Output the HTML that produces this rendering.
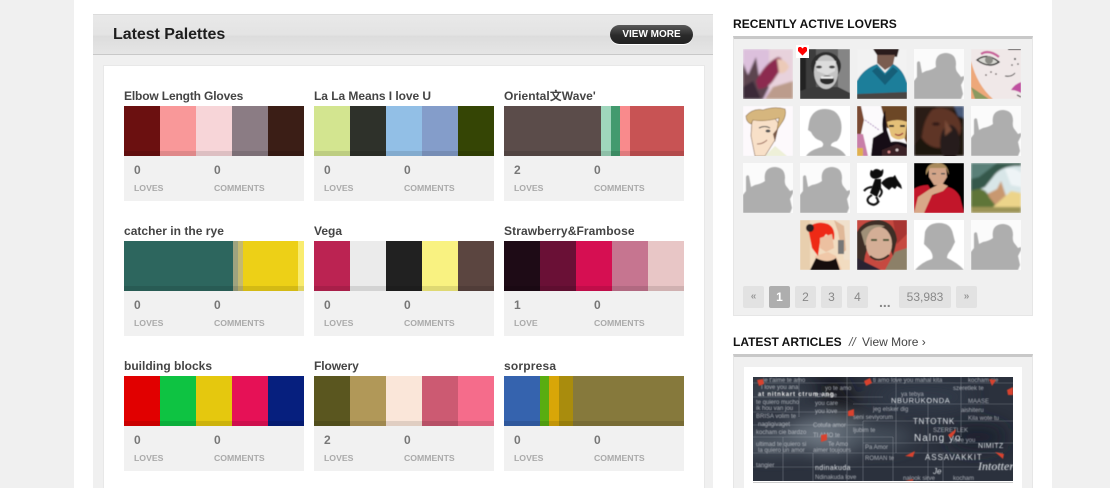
<!DOCTYPE html>
<html><head><meta charset="utf-8">
<style>
html,body{margin:0;padding:0;width:1110px;height:488px;overflow:hidden;background:#f0f0f0}
#r{position:absolute;left:0;top:0;width:1110px;height:488px;overflow:hidden;font-family:"Liberation Sans","Noto Sans CJK SC",sans-serif}
#r div{position:absolute;display:block}
.w{left:74px;top:0;width:978px;height:488px;background:#fff}
.hd{left:93px;top:14px;width:620px;height:41px;box-sizing:border-box;border-top:1px solid #dcdcdc;border-bottom:1px solid #c8c8c8;background:linear-gradient(#e9e9e9 0,#e3e3e3 52%,#dcdcdc 53%,#e5e5e5 100%)}
.pn{left:93px;top:55px;width:620px;height:433px;background:#f0f0f0}
.wb{left:103px;top:65px;width:600px;height:423px;background:#fff;border:1px solid #e8e8e8;border-bottom:0}
.ttl{left:113px;top:25px;font-size:16px;line-height:20px;font-weight:bold;color:#1e1e1e;white-space:nowrap;letter-spacing:-.05px}
.btn{left:610px;top:25px;width:83px;height:19px;border-radius:10px;background:linear-gradient(#5a5a5a,#2a2a2a 55%,#222);color:#fff;font-size:10px;font-weight:bold;line-height:19px;text-align:center;box-shadow:0 1px 0 #fff}
.p{width:180px;height:95px}
.n{left:0;top:-18px;font-size:12px;line-height:16px;font-weight:bold;color:#444;white-space:nowrap}
.s{left:0;top:0;width:180px;height:50px;overflow:hidden}
.s i{position:absolute;top:0;height:50px;display:block}
.st{left:0;top:45px;width:180px;height:5px;background:rgba(0,0,0,.1)}
.b{left:0;top:50px;width:180px;height:45px;background:#f1f1f1}
.v{top:6px;font-size:12px;line-height:16px;font-weight:bold;color:#777}
.l{top:27px;font-size:8.7px;line-height:11px;font-weight:bold;color:#aaa;white-space:nowrap}
.h{left:733px;font-size:12px;line-height:16px;font-weight:bold;color:#111;white-space:nowrap}
.sb{left:733px;top:36px;width:298px;height:276px;background:#f0f0f0;border:1px solid #e6e6e6;border-top:3px solid #c8c8c8}
.pg{top:286px;height:22px;background:#e2e2e2;border-radius:2px;color:#888;font-size:12px;line-height:22px;text-align:center}
</style></head><body><div id="r">
<div class="w"></div>
<div class="hd"></div><div class="pn"></div><div class="wb"></div>
<div class="ttl">Latest Palettes</div><div class="btn">VIEW MORE</div>

<div class="p" style="left:124px;top:106px"><div class="n" style="letter-spacing:-.15px">Elbow Length Gloves</div><div class="s"><i style="left:0;width:36px;background:#6b1010"></i><i style="left:36px;width:36px;background:#f99899"></i><i style="left:72px;width:36px;background:#f7d5d8"></i><i style="left:108px;width:36px;background:#8b7c84"></i><i style="left:144px;width:36px;background:#3b1e16"></i><div class="st"></div></div><div class="b"><div class="v" style="left:10px">0</div><div class="l" style="left:10px">LOVES</div><div class="v" style="left:90px">0</div><div class="l" style="left:90px">COMMENTS</div></div></div>

<div class="p" style="left:314px;top:106px"><div class="n" style="letter-spacing:-.05px">La La Means I love U</div><div class="s"><i style="left:0;width:36px;background:#d3e590"></i><i style="left:36px;width:36px;background:#2e312a"></i><i style="left:72px;width:36px;background:#92bfe6"></i><i style="left:108px;width:36px;background:#849dca"></i><i style="left:144px;width:36px;background:#354505"></i><div class="st"></div></div><div class="b"><div class="v" style="left:10px">0</div><div class="l" style="left:10px">LOVES</div><div class="v" style="left:90px">0</div><div class="l" style="left:90px">COMMENTS</div></div></div>

<div class="p" style="left:504px;top:106px"><div class="n" style="letter-spacing:.05px">Oriental文Wave'</div><div class="s"><i style="left:0;width:97px;background:#5b4c4a"></i><i style="left:97px;width:10px;background:#9fd6bc"></i><i style="left:107px;width:9px;background:#429a6e"></i><i style="left:116px;width:10px;background:#f98a8c"></i><i style="left:126px;width:54px;background:#c85354"></i><div class="st"></div></div><div class="b"><div class="v" style="left:10px">2</div><div class="l" style="left:10px">LOVES</div><div class="v" style="left:90px">0</div><div class="l" style="left:90px">COMMENTS</div></div></div>

<div class="p" style="left:124px;top:241px"><div class="n" style="letter-spacing:.03px">catcher in the rye</div><div class="s"><i style="left:0;width:109px;background:#2d665e"></i><i style="left:109px;width:5px;background:#9fa37f"></i><i style="left:114px;width:5px;background:#c5b970"></i><i style="left:119px;width:55px;background:#edd017"></i><i style="left:174px;width:6px;background:#f9ec6f"></i><div class="st"></div></div><div class="b"><div class="v" style="left:10px">0</div><div class="l" style="left:10px">LOVES</div><div class="v" style="left:90px">0</div><div class="l" style="left:90px">COMMENTS</div></div></div>

<div class="p" style="left:314px;top:241px"><div class="n">Vega</div><div class="s"><i style="left:0;width:36px;background:#bb2352"></i><i style="left:36px;width:36px;background:#ebebeb"></i><i style="left:72px;width:36px;background:#212121"></i><i style="left:108px;width:36px;background:#f9f281"></i><i style="left:144px;width:36px;background:#5b4540"></i><div class="st"></div></div><div class="b"><div class="v" style="left:10px">0</div><div class="l" style="left:10px">LOVES</div><div class="v" style="left:90px">0</div><div class="l" style="left:90px">COMMENTS</div></div></div>

<div class="p" style="left:504px;top:241px"><div class="n" style="letter-spacing:.1px">Strawberry&amp;Frambose</div><div class="s"><i style="left:0;width:36px;background:#1e0b16"></i><i style="left:36px;width:36px;background:#6a1036"></i><i style="left:72px;width:36px;background:#d60f52"></i><i style="left:108px;width:36px;background:#c67590"></i><i style="left:144px;width:36px;background:#e8c6c6"></i><div class="st"></div></div><div class="b"><div class="v" style="left:10px">1</div><div class="l" style="left:10px">LOVE</div><div class="v" style="left:90px">0</div><div class="l" style="left:90px">COMMENTS</div></div></div>

<div class="p" style="left:124px;top:376px"><div class="n">building blocks</div><div class="s"><i style="left:0;width:36px;background:#e10000"></i><i style="left:36px;width:36px;background:#0ec342"></i><i style="left:72px;width:36px;background:#e5c80e"></i><i style="left:108px;width:36px;background:#e61156"></i><i style="left:144px;width:36px;background:#061f7e"></i><div class="st"></div></div><div class="b"><div class="v" style="left:10px">0</div><div class="l" style="left:10px">LOVES</div><div class="v" style="left:90px">0</div><div class="l" style="left:90px">COMMENTS</div></div></div>

<div class="p" style="left:314px;top:376px"><div class="n" style="letter-spacing:-.1px">Flowery</div><div class="s"><i style="left:0;width:36px;background:#5a561f"></i><i style="left:36px;width:36px;background:#b19858"></i><i style="left:72px;width:36px;background:#fae6d9"></i><i style="left:108px;width:36px;background:#cc5a72"></i><i style="left:144px;width:36px;background:#f56c8b"></i><div class="st"></div></div><div class="b"><div class="v" style="left:10px">2</div><div class="l" style="left:10px">LOVES</div><div class="v" style="left:90px">0</div><div class="l" style="left:90px">COMMENTS</div></div></div>

<div class="p" style="left:504px;top:376px"><div class="n" style="letter-spacing:.2px">sorpresa</div><div class="s"><i style="left:0;width:36px;background:#3563ae"></i><i style="left:36px;width:9px;background:#59ad11"></i><i style="left:45px;width:10px;background:#d8a608"></i><i style="left:55px;width:14px;background:#a98c0d"></i><i style="left:69px;width:111px;background:#86793c"></i><div class="st"></div></div><div class="b"><div class="v" style="left:10px">0</div><div class="l" style="left:10px">LOVES</div><div class="v" style="left:90px">0</div><div class="l" style="left:90px">COMMENTS</div></div></div>

<div class="h" style="top:16px;letter-spacing:.04px">RECENTLY ACTIVE LOVERS</div>
<div class="sb"></div>

<svg style="position:absolute;left:0;top:0" width="1110" height="488" viewBox="0 0 1110 488">
<defs>
<filter id="bl" x="-10%" y="-10%" width="120%" height="120%"><feGaussianBlur stdDeviation="1"/></filter>
<filter id="bm" x="-10%" y="-10%" width="120%" height="120%"><feGaussianBlur stdDeviation=".6"/></filter>
<filter id="bs" x="-10%" y="-10%" width="120%" height="120%"><feGaussianBlur stdDeviation=".4"/></filter>
<filter id="bc" x="-30%" y="-30%" width="160%" height="160%"><feGaussianBlur stdDeviation="9"/></filter>
<g id="sa"><rect width="50" height="50" fill="#fbfbfb"/><path filter="url(#bs)" fill="#aeaeae" d="M0 50V32L3 28L3 14Q4 11 6 13L8 24L12 22Q18 21 22 18Q20 5 31 4Q42 4 42 15Q41 21 44 24L47 28L50 27V30L47 36L49 45L47 50Z"/></g>
<g id="sb"><rect width="50" height="50" fill="#fff"/><path filter="url(#bs)" fill="#aeaeae" d="M6 50Q10 44 22 41Q25 38 21 35Q14 33 11 26L8 24Q9 16 10 13Q14 3 25 3Q38 3 41 16Q43 28 37 35Q30 37 31 40Q42 43 46 50Z"/></g>
<g id="sc"><rect width="50" height="50" fill="#fff"/><path filter="url(#bs)" fill="#aeaeae" d="M1 50Q8 42 18 39Q20 36 16 30L10 24L11 12Q14 3 25 3Q37 3 39 14L41 22L37 30Q33 34 33 38Q44 43 50 50Z"/></g>
</defs>

<!-- row 1 -->
<svg x="743" y="49" width="50" height="50"><g filter="url(#bl)"><rect width="50" height="50" fill="#dcc0dc"/><rect x="26" width="24" height="50" fill="#e8d2dc"/><path d="M0 50V14L5 26L13 8L16 28L26 38L20 50Z" fill="#5c4450"/><path d="M0 50V38L10 32L18 50Z" fill="#3a2c38"/><path d="M13 32Q22 14 35 8Q42 9 38 20L30 32Q24 40 15 40Z" fill="#8c2c50"/><path d="M34 10Q43 10 46 18Q42 26 36 24Z" fill="#eccab8"/><path d="M22 50L30 38L50 32V50Z" fill="#bc9c8c"/></g></svg>
<svg x="800" y="49" width="50" height="50"><g filter="url(#bm)"><rect width="50" height="50" fill="#5e5e5e"/><rect width="6" height="50" fill="#242424"/><rect x="6" width="10" height="50" fill="#3e3e3e"/><rect x="38" width="12" height="50" fill="#858585"/><path d="M0 50V42L12 38H38L50 44V50Z" fill="#3a3a3a"/><ellipse cx="26" cy="17" rx="15" ry="14" fill="#2e2e2e"/><ellipse cx="26" cy="23" rx="12" ry="17" fill="#c4c4c4"/><path d="M16 12H36L35 22L27 26L17 22Z" fill="#dcdcdc"/><ellipse cx="19" cy="18" rx="3" ry="1.5" fill="#444"/><ellipse cx="32" cy="18" rx="3" ry="1.5" fill="#444"/><ellipse cx="27" cy="31" rx="7" ry="4.5" fill="#2a2a2a"/><rect x="21" y="27.5" width="12" height="2" fill="#eee"/></g></svg>
<svg x="857" y="49" width="50" height="50"><g filter="url(#bm)"><rect width="50" height="50" fill="#f2f2f2"/><path d="M16 0H42L40 8L32 7L22 9Z" fill="#2b1f1c"/><path d="M20 6H38L36 16L28 21L20 14Z" fill="#7a5c50"/><path d="M0 50V32Q6 20 20 15L28 24L36 15Q46 20 50 34V50Z" fill="#1f7e9a"/><path d="M15 22L28 36L41 22L36 18L28 26L20 18Z" fill="#125f78"/><path d="M0 45L50 43V50H0Z" fill="#4a4442"/></g></svg>
<svg x="914" y="49" width="50" height="50"><use href="#sa"/></svg>
<svg x="971" y="49" width="50" height="50"><g filter="url(#bs)"><rect width="50" height="50" fill="#f0e8e8"/><path d="M0 12Q6 36 22 50H0Z" fill="#eda87a"/><path d="M0 38L18 50H4Z" fill="#8a9a60"/><path d="M6 11Q16 3 28 13Q18 20 6 11Z" fill="#d8d8d2" stroke="#222" stroke-width="1.4"/><circle cx="18" cy="11" r="4" fill="#8a8a84"/><path d="M10 5Q18 0 28 8" stroke="#c8609a" stroke-width="2.4" fill="none"/><path d="M37 0H50" stroke="#222" stroke-width="1.6"/><path d="M34 27Q41 28 44 24" stroke="#333" fill="none"/><path d="M40 41Q44 35 50 33V44Q45 41 40 41Z" fill="#c050a0"/><path d="M46 46L50 48" stroke="#222"/><circle cx="44" cy="10" r="1" fill="#222"/><circle cx="41" cy="16" r=".8" fill="#222"/><circle cx="47" cy="15" r=".8" fill="#222"/><circle cx="20" cy="23" r=".8" fill="#322"/><circle cx="15" cy="26" r=".8" fill="#322"/><circle cx="25" cy="25" r=".8" fill="#322"/></g></svg>
<!-- row 2 -->
<svg x="743" y="106" width="50" height="50"><g filter="url(#bs)"><rect width="50" height="50" fill="#fdf9fc"/><path d="M12 50L8 30L9 14L30 10L36 18L32 34L22 50Z" fill="#f8e0c8" stroke="#7a5a40" stroke-width=".6"/><path d="M3 10Q10 2 20 4Q32 0 42 3Q44 10 38 18L34 24L36 12Q22 16 10 14L8 18Q3 16 3 10Z" fill="#d6b67e" stroke="#8a6a3a" stroke-width=".6"/><path d="M16 22Q22 19 27 22" stroke="#444" fill="none"/><ellipse cx="25" cy="25" rx="2.5" ry="1.5" fill="#555"/><path d="M30 28L35 22L32 36Z" fill="#7a5a48"/><path d="M14 38Q20 38 24 34" stroke="#a07060" fill="none"/><path d="M22 50L32 40L44 50Z" fill="#eef0d8"/></g></svg>
<svg x="800" y="106" width="50" height="50"><use href="#sb"/></svg>
<svg x="857" y="106" width="50" height="50"><g filter="url(#bs)"><rect width="50" height="50" fill="#fcfafc"/><path d="M0 28H6L11 50H0Z" fill="#c87ea8"/><path d="M0 0H4L7 14L4 28H0Z" fill="#7a4830"/><path d="M0 42H6V50H0Z" fill="#e0b050"/><path d="M24 0H50V38L44 24L30 22Z" fill="#6c4628"/><path d="M28 4Q24 14 26 26L16 32L14 50H50V38Q40 34 34 36L30 24Z" fill="#151012"/><path d="M30 16Q40 12 50 16L48 32Q40 36 34 30Z" fill="#e4c078"/><rect x="32" y="19" width="5" height="2" fill="#222"/><rect x="43" y="19" width="5" height="2" fill="#222"/><path d="M38 28Q42 31 46 27" stroke="#a04040" stroke-width="1.4" fill="none"/><path d="M25 44L40 38L50 42V50H25Z" fill="#3a2228"/><circle cx="32" cy="46" r="1.4" fill="#d88"/><circle cx="40" cy="44" r="1.4" fill="#dcc"/><path d="M8 14L22 24" stroke="#b090c0" stroke-dasharray="2 1" fill="none"/></g></svg>
<svg x="914" y="106" width="50" height="50"><g filter="url(#bl)"><rect width="50" height="50" fill="#1e1410"/><path d="M0 0H50V6L30 2Z" fill="#3a2a24"/><path d="M40 0H50V12L44 10Z" fill="#4a5a7a"/><ellipse cx="26" cy="22" rx="21" ry="20" fill="#5e3626"/><path d="M0 0H22Q10 10 8 30L0 40Z" fill="#2a1a14"/><ellipse cx="22" cy="18" rx="4" ry="1.6" fill="#2a1812"/><ellipse cx="36" cy="37" rx="10" ry="18" fill="#261c1a"/><path d="M31 14L38 24L31 30Z" fill="#7a4c38"/></g></svg>
<svg x="971" y="106" width="50" height="50"><use href="#sa"/></svg>
<!-- row 3 -->
<svg x="743" y="163" width="50" height="50"><use href="#sa"/></svg>
<svg x="800" y="163" width="50" height="50"><use href="#sa"/></svg>
<svg x="857" y="163" width="50" height="50"><rect width="50" height="50" fill="#fff"/><g filter="url(#bs)" fill="#0c0c0c"><path d="M14 7Q12 11 14 14Q18 18 25 13Q27 9 26 6L24 8Q19 4 16 8Z"/><path d="M18 16L24 16L24 24L20 34L13 30Z"/><path d="M24 20Q30 13 36 14L38 12L40 16L44 22L45 26L40 23L38 26L35 24L32 27L28 24Z"/></g><g stroke="#0c0c0c" stroke-width="2" fill="none" filter="url(#bs)"><path d="M16 24Q10 24 7 28"/><path d="M21 24Q28 28 22 34"/><path d="M15 32Q8 36 12 40Q18 44 22 38"/><path d="M19 34Q24 40 16 42"/></g></svg>
<svg x="914" y="163" width="50" height="50"><g filter="url(#bm)"><rect width="50" height="50" fill="#040404"/><path d="M0 50V26Q6 22 14 22L20 32L34 24Q42 26 46 34L50 50Z" fill="#c2182c"/><path d="M15 4H32L33 14L28 22L20 22L15 14Z" fill="#d2a488"/><path d="M12 12Q11 0 24 0Q34 0 35 12L32 5H16Z" fill="#a88a5c"/><rect x="18" y="10" width="4" height="1.5" fill="#555"/><rect x="27" y="10" width="4" height="1.5" fill="#555"/><path d="M0 50L4 34L16 26L27 20L34 23L29 28L18 32L10 50Z" fill="#d8a888"/></g></svg>
<svg x="971" y="163" width="50" height="50"><g filter="url(#bl)"><rect width="50" height="50" fill="#d8e6e8"/><path d="M0 0H50V3Q30 2 22 14L14 24L0 30Z" fill="#34594c"/><path d="M0 0H26L8 14L0 16Z" fill="#5a8078"/><path d="M26 26L30 18L36 36L42 44L10 46L14 32Z" fill="#c89870"/><path d="M0 28Q14 22 18 34L26 44H0Z" fill="#5e7438"/><path d="M22 44L40 28L50 30V46Z" fill="#ecd48a"/><path d="M0 44H50V50H0Z" fill="#9c9456"/><path d="M34 6Q44 4 50 10V24L40 22Z" fill="#eef4f6"/></g></svg>
<!-- row 4 -->
<svg x="800" y="220" width="50" height="50"><g filter="url(#bs)"><rect width="50" height="50" fill="#f2dcc0"/><rect width="10" height="50" fill="#e8cfae"/><path d="M34 0H50V40H44L40 20Z" fill="#f0e0cc"/><path d="M18 50L15 36L28 32L36 36L42 50Z" fill="#f0c8a8"/><path d="M10 50L16 38Q28 44 36 38L40 50Z" fill="#151010"/><path d="M8 8Q16 0 28 4Q36 8 34 20L26 14L20 22L18 36L12 28Z" fill="#ee2a14"/><path d="M20 18L32 14L34 28L26 32L20 28Z" fill="#ecc0a0"/><circle cx="10" cy="8" r="4" fill="#2a2220"/><path d="M34 0L44 6L46 30L42 34L38 12Z" fill="#e0b898"/><rect x="38" y="20" width="6" height="14" fill="#777"/></g></svg>
<svg x="857" y="220" width="50" height="50"><g filter="url(#bm)"><rect width="50" height="50" fill="#c64a40"/><path d="M36 0H50V14L40 24Z" fill="#a83630"/><path d="M0 50V12Q6 0 22 0Q38 2 40 20L36 36L28 16H14L8 36L6 50Z" fill="#3c2e28"/><path d="M4 12Q12 2 28 6L18 10L8 26Z" fill="#a09078"/><ellipse cx="22" cy="24" rx="13" ry="17" fill="#d4ae96"/><rect x="14" y="19" width="6" height="2" fill="#453"/><rect x="26" y="19" width="6" height="2" fill="#453"/><path d="M13 36Q22 44 32 35" stroke="#3a2c20" stroke-width="2" fill="none"/><path d="M28 50L38 32L50 28V50Z" fill="#8c8068"/><path d="M0 50V38L12 44L24 50Z" fill="#2a2430"/></g></svg>
<svg x="914" y="220" width="50" height="50"><use href="#sc"/></svg>
<svg x="971" y="220" width="50" height="50"><use href="#sa"/></svg>
<!-- heart -->
<rect x="796" y="45" width="13" height="13" fill="#fff"/>
<path d="M802.5 55.5L798 51V48L799 47H801L802.5 48.5L804 47H806L807 48V51Z" fill="#f00"/>
</svg>

<div class="pg" style="left:743px;width:21px;font-size:10px;font-weight:bold;color:#999">«</div>
<div class="pg" style="left:769px;width:21px;background:#aeaeae;color:#fff;font-weight:bold">1</div>
<div class="pg" style="left:795px;width:21px">2</div>
<div class="pg" style="left:821px;width:21px">3</div>
<div class="pg" style="left:847px;width:21px">4</div>
<div style="left:879px;top:294px;font-size:14px;line-height:16px;font-weight:bold;color:#888">...</div>
<div class="pg" style="left:899px;width:52px">53,983</div>
<div class="pg" style="left:956px;width:21px;font-size:10px;font-weight:bold;color:#999">»</div>

<div class="h" style="top:334px">LATEST ARTICLES</div>
<div style="left:849px;top:334px;font-size:12px;line-height:16px;color:#555;font-style:italic">//</div>
<div style="left:862px;top:334px;font-size:12px;line-height:16px;color:#444;white-space:nowrap">View More ›</div>
<div style="left:733px;top:354px;width:298px;height:134px;background:#f0f0f0;border:1px solid #e6e6e6;border-top:3px solid #c8c8c8;border-bottom:0"></div>
<div style="left:744px;top:367px;width:278px;height:121px;background:#fff"></div>

<svg style="position:absolute;left:753px;top:377px" width="260" height="104" viewBox="0 0 260 104" font-family="Liberation Sans, sans-serif">
<rect width="260" height="104" fill="#2b313d"/>
<g filter="url(#bc)">
<path d="M60 0L90 0L120 60L80 40Z" fill="#12161f"/>
<ellipse cx="75" cy="58" rx="45" ry="18" fill="#6e7883"/>
<ellipse cx="20" cy="66" rx="40" ry="10" fill="#56606c"/>
<ellipse cx="120" cy="60" rx="40" ry="10" fill="#49535f"/>
<ellipse cx="225" cy="60" rx="30" ry="14" fill="#1c222e"/>
<ellipse cx="170" cy="20" rx="50" ry="14" fill="#333a48"/>
<ellipse cx="20" cy="15" rx="35" ry="15" fill="#38404c"/>
</g>
<g stroke="#aab0b8" stroke-width=".6" opacity=".5" fill="none">
<path d="M0 6H260M0 20H130M100 27H260M0 35H100M110 44H260M0 48H110M0 60H140M0 76H250M110 66H260M0 90H260"/>
<path d="M46 0V40M94 0V104M143 0V76M175 20V104M208 0V60M30 60V104M60 76V104M110 44V104M140 60V104M190 76V104"/>
</g>
<g fill="#c8ccd2" font-size="6" filter="url(#bs)" opacity=".8">
<text x="10" y="5">je t'aime te amo</text><text x="120" y="5">ti amo love you mahal kita</text><text x="215" y="5">kocham cie</text>
<text x="8" y="12">I love you ana</text><text x="72" y="13">yo te amo</text><text x="200" y="13">szeretlek te</text>
<text x="62" y="20">ich liebe</text><text x="148" y="19">ya tebya</text><text x="215" y="26">MAASE</text>
<text x="3" y="27">te quiero mucho</text><text x="62" y="28">you care</text><text x="120" y="34">jeg elsker dig</text>
<text x="3" y="33">ik hou van jou</text><text x="208" y="35">aishiteru</text><text x="62" y="36">you love</text>
<text x="3" y="41">BRISA volim te</text><text x="100" y="42">seni seviyorum</text><text x="215" y="43">Kila wote tu</text>
<text x="5" y="49">nagligivaget</text><text x="60" y="50">Cotufa amor</text><text x="100" y="55">ljubim te</text>
<text x="3" y="57">kocham cie bardzo</text><text x="180" y="55">SZERETLEK</text><text x="60" y="60">TI AMO te</text>
<text x="3" y="69">ultimad te quiero si</text><text x="75" y="69">Te Amo</text><text x="112" y="72">Pa Amor</text><text x="200" y="65">love you</text>
<text x="5" y="75">la quiero un amor</text><text x="60" y="75">aimer toujours</text><text x="112" y="83">ROMAN te</text>
<text x="3" y="90">tangier</text><text x="200" y="103">kocham</text><text x="62" y="102">Ndinakuda love</text><text x="150" y="103">nalook sirve</text>
</g>
<g fill="#dfe3e7" filter="url(#bs)">
<text x="138" y="26" font-size="7.5" letter-spacing=".6">NBURUKONDA</text>
<text x="160" y="47" font-size="8" letter-spacing=".6">TNTOTNK</text>
<text x="161" y="64" font-size="10" letter-spacing="1">Nalng yo</text>
<text x="172" y="83" font-size="8" letter-spacing=".9">ASSAVAKKIT</text>
<text x="225" y="71" font-size="7" letter-spacing=".4">NIMITZ</text>
<text x="225" y="93" font-size="12" font-style="italic" font-family="Liberation Serif, serif">Intotter</text>
<text x="180" y="97" font-size="8" font-style="italic">Je</text>
<text x="62" y="93" font-size="7" letter-spacing=".4">ndinakuda</text>
<text x="5" y="19" font-size="6" font-weight="bold" fill="#f0f0f0" letter-spacing=".8">at nitnkart ctrum ang</text>
</g>
<g fill="#d9432e" filter="url(#bs)">
<path d="M4 3L10 2L11 7L6 9Z"/><path d="M111 4L117 1L119 6L113 9Z"/><path d="M236 2L243 3L239 9Z"/><path d="M254 13L260 10V18L255 18Z"/>
<path d="M95 34L101 32L101 39L95 39Z"/><path d="M68 58L74 57L74 63L68 65Z"/><path d="M195 58L203 52L202 56L198 61Z"/><path d="M152 79L162 74L160 80Z"/><path d="M242 75L251 77L250 82Z"/><path d="M152 104L160 102V104Z"/>
</g>
</svg>
<div style="left:753px;top:482px;width:260px;height:1px;background:#ccc"></div>
</div></body></html>
